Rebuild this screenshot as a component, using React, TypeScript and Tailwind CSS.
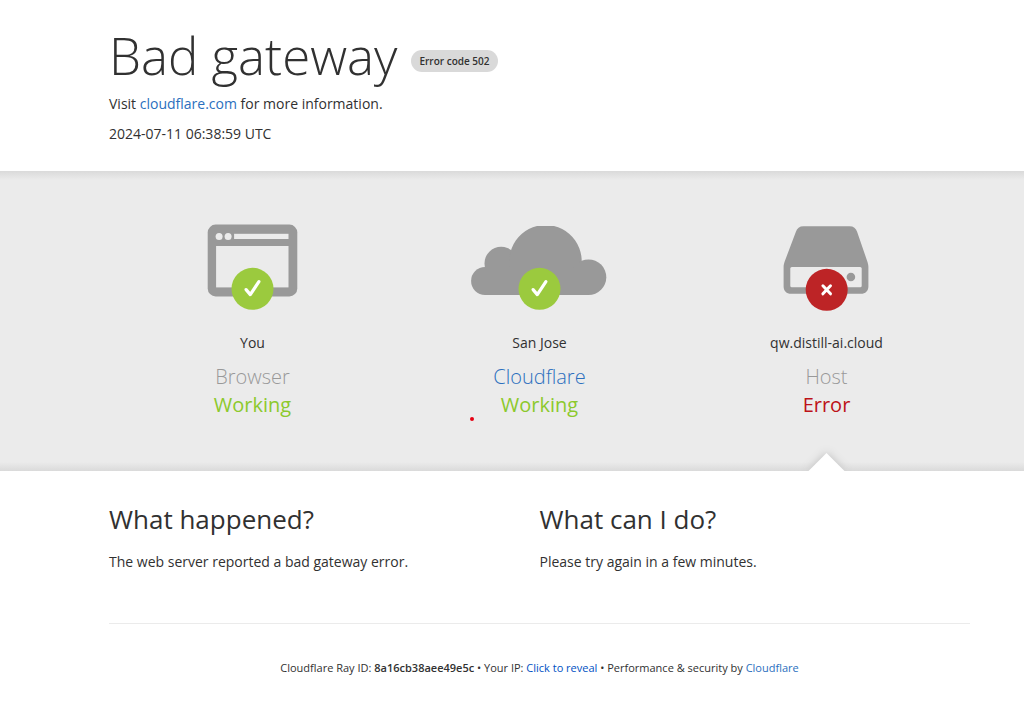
import type { ReactNode } from "react";

const navLink = "text-[#2b6fbe] hover:text-[#ee730a]";

function CheckBadge() {
  return (
    <g>
      <circle cx="70" cy="64.8" r="21" fill="#9bca3e" />
      <path
        d="M63.6 65.6 67.8 70.6 76.4 57.6"
        fill="none"
        stroke="#fff"
        strokeWidth="3.2"
        strokeLinecap="round"
        strokeLinejoin="round"
      />
    </g>
  );
}

function BrowserIcon() {
  return (
    <svg className="h-[88px] w-[141px]" viewBox="-0.5 0 141 88" aria-hidden="true">
      <rect x="25.2" y="0.6" width="89.6" height="71.8" rx="8" fill="#999" />
      <circle cx="36.6" cy="12.4" r="3.5" fill="#ebebeb" />
      <circle cx="45.6" cy="12.4" r="3.5" fill="#ebebeb" />
      <rect x="51.6" y="9.8" width="54.4" height="5.2" fill="#ebebeb" />
      <rect x="33.6" y="22" width="72.4" height="41.4" fill="#ebebeb" />
      <CheckBadge />
    </svg>
  );
}

function CloudIcon() {
  return (
    <svg className="h-[88px] w-[141px]" viewBox="-0.5 0 141 88" aria-hidden="true">
      <g fill="#999">
        <circle cx="15.6" cy="57" r="14" />
        <circle cx="31.6" cy="39.4" r="16.6" />
        <path d="M67.5 2h17a36.2 36.2 0 1 1-17 0z" />
        <circle cx="119" cy="53.2" r="17.8" />
        <path d="M15.6 45h104v26h-104z" />
      </g>
      <CheckBadge />
    </svg>
  );
}

function HostIcon() {
  return (
    <svg className="h-[88px] w-[141px]" viewBox="-0.5 0 141 88" aria-hidden="true">
      <path
        d="M47 2.200h46c4 0 6.500 2 7.600 5.500L111 38c.6 2 .9 3.500.9 5v19.500c0 4.500-3 7.300-7.400 7.300h-70c-4.400 0-7.400-2.800-7.400-7.300V43c0-1.500.3-3 .9-5L39.400 7.700C40.500 4.200 43 2.200 47 2.200z"
        fill="#999"
      />
      <rect x="33.8" y="43" width="71.4" height="20.3" rx="1.5" fill="#ebebeb" />
      <circle cx="94.4" cy="53" r="4.3" fill="#999" />
      <circle cx="70.2" cy="65.8" r="21" fill="#bd2426" />
      <path
        d="M66.4 61.8 74 69.8M74 61.8 66.4 69.8"
        stroke="#fff"
        strokeWidth="3"
        strokeLinecap="round"
      />
    </svg>
  );
}

type StatusProps = {
  icon: ReactNode;
  name: string;
  label: ReactNode;
  status: string;
  statusClass: string;
  children?: ReactNode;
};

function Status({ icon, name, label, status, statusClass, children }: StatusProps) {
  return (
    <div className="relative flex flex-1 flex-col items-center pt-[53px] pb-[52px] text-center">
      {icon}
      <span className="mt-[19px] text-sm leading-6">{name}</span>
      <h3 className="mt-2 text-xl leading-7 font-light text-[#999]">{label}</h3>
      <span className={`text-xl leading-7 ${statusClass}`}>{status}</span>
      {children}
    </div>
  );
}

export default function App() {
  return (
    <div className="bg-white font-['Open_Sans','Noto_Sans',sans-serif] text-sm text-[#313131]">
      <header className="pt-[23px] pr-[54px] pb-[25px] pl-[109px]">
        <h1 className="flex items-center gap-[14px]">
          <span className="text-[51px] leading-[64px] font-light">Bad gateway</span>
          <span className="mt-3 rounded-full bg-[#d9d9d9] px-2 text-[10px] leading-[22px] font-semibold">
            Error code 502
          </span>
        </h1>
        <p className="mt-[5px] leading-6">
          Visit{" "}
          <a href="#" className={navLink}>
            cloudflare.com
          </a>{" "}
          for more information.
        </p>
        <p className="mt-[6px] leading-6">2024-07-11 06:38:59 UTC</p>
      </header>

      <section className="bg-[linear-gradient(#dadada,#ebebeb_3%,#ebebeb_97%,#dadada)] pr-[54px] pl-[109px]">
        <div className="flex">
          <Status
            icon={<BrowserIcon />}
            name="You"
            label="Browser"
            status="Working"
            statusClass="text-[#8cc92c]"
          />
          <Status
            icon={<CloudIcon />}
            name="San Jose"
            label={
              <a href="#" className={navLink}>
                Cloudflare
              </a>
            }
            status="Working"
            statusClass="text-[#8cc92c]"
          >
            <span className="absolute bottom-[50px] left-[74px] size-1 rounded-full bg-[#e60012]" />
          </Status>
          <Status
            icon={<HostIcon />}
            name="qw.distill-ai.cloud"
            label="Host"
            status="Error"
            statusClass="text-[#bd1218]"
          >
            <svg
              className="absolute bottom-0 left-1/2 h-7 w-14 -translate-x-1/2"
              viewBox="0.5 0 56 28"
              aria-hidden="true"
            >
              <path
                className="drop-shadow-[0_0_4px_#bbb]"
                d="M9.5 28.5 28 10 46.5 28.5z"
                fill="#fff"
              />
            </svg>
          </Status>
        </div>
      </section>

      <main className="pr-[54px] pl-[109px]">
        <div className="flex pt-7 pb-[49px]">
          <div className="flex-1">
            <h2 className="text-[26px] leading-10">What happened?</h2>
            <p className="mt-[11px] leading-6">The web server reported a bad gateway error.</p>
          </div>
          <div className="flex-1">
            <h2 className="text-[26px] leading-10">What can I do?</h2>
            <p className="mt-[11px] leading-6">Please try again in a few minutes.</p>
          </div>
        </div>

        <footer className="border-t border-[#ebebeb] pt-8 pb-11 text-center text-[11px] leading-6">
          Cloudflare Ray ID: <strong className="font-semibold">8a16cb38aee49e5c</strong> • Your IP:{" "}
          <button type="button" className="cursor-pointer text-[#0051c3]">
            Click to reveal
          </button>{" "}
          • Performance &amp; security by{" "}
          <a href="#" className={navLink}>
            Cloudflare
          </a>
        </footer>
      </main>
    </div>
  );
}
